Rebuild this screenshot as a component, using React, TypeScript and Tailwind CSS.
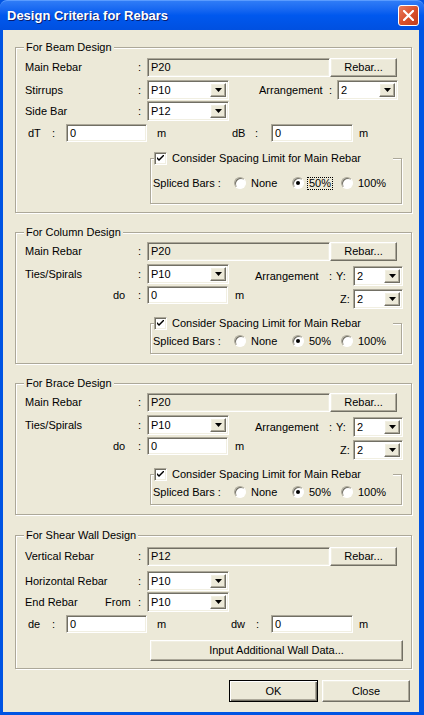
import React from 'react';

const sunken =
  'border border-t-[#aca899] border-l-[#aca899] border-r-white border-b-white shadow-[inset_1px_1px_0_#716f64,inset_-1px_-1px_0_#f1efe2]';
const raised =
  'border border-t-white border-l-white border-r-[#716f64] border-b-[#716f64] shadow-[inset_-1px_-1px_0_#aca899,inset_1px_1px_0_#f1efe2] bg-[#ece9d8]';

function Field({ value, w, h = 'h-[18px]', disabled = false }: { value: string; w: string; h?: string; disabled?: boolean }) {
  return (
    <div className={`${w} ${h} ${sunken} ${disabled ? 'bg-[#ece9d8]' : 'bg-white'} flex items-center pl-[3px] shrink-0`}>
      {value}
    </div>
  );
}

function Combo({ value, w }: { value: string; w: string }) {
  return (
    <div className={`${w} h-[20px] ${sunken} bg-white flex items-center shrink-0 p-[2px]`}>
      <span className="flex-1 pl-[1px]">{value}</span>
      <span className={`w-[16px] h-full ${raised} flex items-center justify-center`}>
        <svg width="7" height="4" viewBox="0 0 7 4">
          <path d="M0 0h7L3.5 4z" fill="#000" />
        </svg>
      </span>
    </div>
  );
}

function Btn({ label, w, h = 'h-[19px]' }: { label: string; w: string; h?: string }) {
  return <div className={`${w} ${h} ${raised} flex items-center justify-center shrink-0`}>{label}</div>;
}

function Radio({ checked, label, w, focus = false }: { checked?: boolean; label: string; w: string; focus?: boolean }) {
  return (
    <div className={`${w} flex items-center shrink-0`}>
      <span className="w-[12px] h-[12px] rounded-full border border-t-[#aca899] border-l-[#aca899] border-r-white border-b-white shadow-[inset_1px_1px_0_#716f64] bg-white flex items-center justify-center">
        {checked && <span className="w-[4px] h-[4px] rounded-full bg-black" />}
      </span>
      <span className={`ml-[4px] px-[1px] ${focus ? 'outline outline-1 outline-dotted outline-black' : ''}`}>{label}</span>
    </div>
  );
}

function Spacing({ h, mt, rowMt, focus }: { h: string; mt: string; rowMt: string; focus?: boolean }) {
  return (
    <div className={`relative ml-[134px] w-[252px] ${h} ${mt} border border-[#aca899] shadow-[1px_1px_0_white,inset_1px_1px_0_white]`}>
      <div className="absolute left-[3px] top-[-8px] w-[239px] h-[14px] bg-[#ece9d8] flex items-center">
        <span className={`w-[13px] h-[13px] ${sunken} bg-white flex items-center justify-center`}>
          <svg width="7" height="7" viewBox="0 0 7 7">
            <path d="M0 2v2l2 2 5-5V-1L2 4z" fill="#000" />
          </svg>
        </span>
        <span className="ml-[5px]">Consider Spacing Limit for Main Rebar</span>
      </div>
      <div className={`flex items-center h-[16px] ${rowMt} pl-[2px]`}>
        <span className="w-[87px]">Spliced Bars :</span>
        <Radio label="None" w="w-[58px]" />
        <Radio label="50%" w="w-[49px]" checked focus={focus} />
        <Radio label="100%" w="w-[60px]" />
      </div>
    </div>
  );
}

function Group({ title, h, mt, children }: { title: string; h: string; mt: string; children: React.ReactNode }) {
  return (
    <div className={`relative ml-[12px] w-[397px] ${h} ${mt} border border-[#aca899] shadow-[1px_1px_0_white,inset_1px_1px_0_white] shrink-0`}>
      <span className="absolute left-[8px] top-[-8px] px-[2px] bg-[#ece9d8] leading-[14px]">{title}</span>
      {children}
    </div>
  );
}

function ColumnLike({ title, mt }: { title: string; mt: string }) {
  return (
    <Group title={title} h="h-[132px]" mt={mt}>
      <div className="flex items-center h-[19px] mt-[9px] pl-[9px]">
        <span className="w-[113px]">Main Rebar</span>
        <span className="w-[9px]">:</span>
        <Field value="P20" w="w-[183px]" h="h-[19px]" disabled />
        <Btn label="Rebar..." w="w-[67px]" />
      </div>
      <div className="flex items-start h-[20px] mt-[3px] pl-[9px]">
        <div className="flex items-center h-[20px]">
          <span className="w-[113px]">Ties/Spirals</span>
          <span className="w-[9px]">:</span>
          <Combo value="P10" w="w-[82px]" />
        </div>
        <div className="flex items-center h-[20px] mt-[2px] ml-[26px]">
          <span className="w-[74px]">Arrangement</span>
          <span className="w-[7px]">:</span>
          <span className="w-[17px]">Y:</span>
          <Combo value="2" w="w-[50px]" />
        </div>
      </div>
      <div className="flex items-start h-[18px] mt-[2px] pl-[9px]">
        <div className="flex items-center h-[18px]">
          <span className="w-[113px] pl-[88px]">do</span>
          <span className="w-[9px]">:</span>
          <Field value="0" w="w-[81px]" />
          <span className="ml-[7px] w-[105px]">m</span>
        </div>
        <div className="flex items-center h-[20px] mt-[3px]">
          <span className="w-[13px]">Z:</span>
          <Combo value="2" w="w-[50px]" />
        </div>
      </div>
      <Spacing h="h-[31px]" mt="mt-[19px]" rowMt="mt-[9px]" />
    </Group>
  );
}

export default function App() {
  return (
    <div className="w-[424px] h-[715px] flex flex-col bg-[#0054e3] text-[11px] text-black leading-none select-none" style={{ fontFamily: '"Liberation Sans", Arial, sans-serif' }}>
      {/* title bar */}
      <div className="h-[30px] shrink-0 flex items-center justify-between bg-gradient-to-b from-[#2f7cf6] via-[#0058ee] to-[#0050e0] rounded-t-[7px] border-t border-[#5a9cff] pl-[7px] pr-[5px]">
        <span className="text-white font-bold text-[13px] [text-shadow:1px_1px_0_#0a1d6e]">Design Criteria for Rebars</span>
        <div className="w-[21px] h-[21px] rounded-[3px] border border-white bg-gradient-to-br from-[#e97b5c] via-[#d9512c] to-[#c23d1a] flex items-center justify-center">
          <svg width="11" height="11" viewBox="0 0 11 11">
            <path d="M1 1l9 9M10 1l-9 9" stroke="#fff" strokeWidth="2.2" strokeLinecap="square" />
          </svg>
        </div>
      </div>

      {/* client area */}
      <div className="flex-1 flex flex-col ml-[3px] mr-[5px] mb-[3px] bg-[#ece9d8] bg-clip-padding">
        {/* Beam */}
        <Group title="For Beam Design" h="h-[166px]" mt="mt-[17px]">
          <div className="flex items-center h-[19px] mt-[10px] pl-[9px]">
            <span className="w-[113px]">Main Rebar</span>
            <span className="w-[9px]">:</span>
            <Field value="P20" w="w-[183px]" h="h-[19px]" disabled />
            <Btn label="Rebar..." w="w-[67px]" />
          </div>
          <div className="flex items-center h-[20px] mt-[3px] pl-[9px]">
            <span className="w-[113px]">Stirrups</span>
            <span className="w-[9px]">:</span>
            <Combo value="P10" w="w-[82px]" />
            <span className="ml-[30px] w-[70px]">Arrangement</span>
            <span className="w-[8px]">:</span>
            <Combo value="2" w="w-[61px]" />
          </div>
          <div className="flex items-center h-[20px] mt-[1px] pl-[9px]">
            <span className="w-[113px]">Side Bar</span>
            <span className="w-[9px]">:</span>
            <Combo value="P12" w="w-[82px]" />
          </div>
          <div className="flex items-center h-[18px] mt-[3px] pl-[12px]">
            <span className="w-[24px]">dT</span>
            <span className="w-[14px]">:</span>
            <Field value="0" w="w-[81px]" />
            <span className="ml-[10px] w-[75px]">m</span>
            <span className="w-[23px]">dB</span>
            <span className="w-[16px]">:</span>
            <Field value="0" w="w-[82px]" />
            <span className="ml-[6px]">m</span>
          </div>
          <Spacing h="h-[46px]" mt="mt-[16px]" rowMt="mt-[16px]" focus />
        </Group>

        <ColumnLike title="For Column Design" mt="mt-[19px]" />
        <ColumnLike title="For Brace Design" mt="mt-[19px]" />

        {/* Shear wall */}
        <Group title="For Shear Wall Design" h="h-[134px]" mt="mt-[20px]">
          <div className="flex items-center h-[19px] mt-[11px] pl-[9px]">
            <span className="w-[113px]">Vertical Rebar</span>
            <span className="w-[9px]">:</span>
            <Field value="P12" w="w-[183px]" h="h-[19px]" disabled />
            <Btn label="Rebar..." w="w-[67px]" />
          </div>
          <div className="flex items-center h-[20px] mt-[5px] pl-[9px]">
            <span className="w-[113px]">Horizontal Rebar</span>
            <span className="w-[9px]">:</span>
            <Combo value="P10" w="w-[82px]" />
          </div>
          <div className="flex items-center h-[20px] mt-[1px] pl-[9px]">
            <span className="w-[80px]">End Rebar</span>
            <span className="w-[33px]">From</span>
            <span className="w-[9px]">:</span>
            <Combo value="P10" w="w-[82px]" />
          </div>
          <div className="flex items-center h-[18px] mt-[3px] pl-[12px]">
            <span className="w-[24px]">de</span>
            <span className="w-[14px]">:</span>
            <Field value="0" w="w-[81px]" />
            <span className="ml-[10px] w-[74px]">m</span>
            <span className="w-[25px]">dw</span>
            <span className="w-[15px]">:</span>
            <Field value="0" w="w-[82px]" />
            <span className="ml-[6px]">m</span>
          </div>
          <div className="flex h-[21px] mt-[7px] ml-[134px]">
            <Btn label="Input Additional Wall Data..." w="w-[253px]" h="h-[21px]" />
          </div>
        </Group>

        {/* buttons */}
        <div className="flex h-[22px] mt-[11px] ml-[226px] gap-[4px]">
          <div className="w-[89px] h-[22px] border border-black shadow-[inset_1px_1px_0_white,inset_-1px_-1px_0_#716f64,inset_-2px_-2px_0_#aca899] bg-[#ece9d8] flex items-center justify-center">
            OK
          </div>
          <Btn label="Close" w="w-[88px]" h="h-[22px]" />
        </div>
      </div>
    </div>
  );
}
